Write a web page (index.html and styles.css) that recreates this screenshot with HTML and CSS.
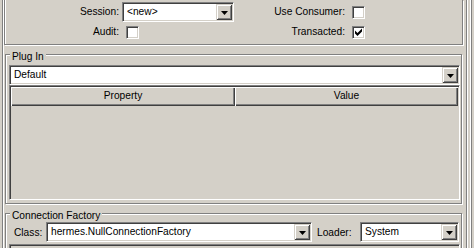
FILE: index.html
```html
<!DOCTYPE html>
<html lang="en">
<head>
    <meta charset="UTF-8">
    <title>Destination Properties</title>
    <link rel="stylesheet" href="styles.css">
</head>
<body>
    <div class="frame">
        <div class="content">
            <div class="props">
                <div class="label">Session:</div>
                <div class="combo">
                    <div class="value">&lt;new&gt;</div>
                    <div class="drop"><svg width="7" height="4" viewBox="0 0 7 4"><path d="M0 0h7l-3.5 4z" fill="#000"/></svg></div>
                </div>
                <div class="label label-wide">Use Consumer:</div>
                <div class="cell"><span class="check"></span></div>
                <div class="label">Audit:</div>
                <div class="cell"><span class="check check-inset"></span></div>
                <div class="label label-wide">Transacted:</div>
                <div class="cell">
                    <span class="check"><svg width="7" height="8" viewBox="0 0 7 8"><path d="M0 2.5L2.5 5L7 0.5V3.5L2.5 8L0 5.5Z" fill="#000"/></svg></span>
                </div>
            </div>

            <div class="group plugin">
                <div class="group-title">Plug In</div>
                <div class="combo">
                    <div class="value">Default</div>
                    <div class="drop"><svg width="7" height="4" viewBox="0 0 7 4"><path d="M0 0h7l-3.5 4z" fill="#000"/></svg></div>
                </div>
                <div class="table">
                    <div class="thead">
                        <div class="th th-first">Property</div>
                        <div class="th">Value</div>
                    </div>
                </div>
            </div>

            <div class="group factory">
                <div class="group-title">Connection Factory</div>
                <div class="factory-row">
                    <div class="row-label row-label-class">Class:</div>
                    <div class="combo combo-class">
                        <div class="value">hermes.NullConnectionFactory</div>
                        <div class="drop"><svg width="7" height="4" viewBox="0 0 7 4"><path d="M0 0h7l-3.5 4z" fill="#000"/></svg></div>
                    </div>
                    <div class="row-label row-label-loader">Loader:</div>
                    <div class="combo combo-loader">
                        <div class="value">System</div>
                        <div class="drop"><svg width="7" height="4" viewBox="0 0 7 4"><path d="M0 0h7l-3.5 4z" fill="#000"/></svg></div>
                    </div>
                </div>
                <div class="table table-factory"></div>
            </div>
        </div>
        <div class="divider"></div>
    </div>
</body>
</html>
```
FILE: styles.css
```css
body {
    margin: 0;
    background-color: #d4d0c8;
    font-family: "Liberation Sans", Arial, sans-serif;
    font-size: 10.2px;
    color: #000;
    overflow: hidden;
}
.frame {
    display: flex;
    height: 248px;
    width: 470px;
    margin-left: 2px;
    box-sizing: border-box;
    overflow: hidden;
    border-left: 1px solid #808080;
    border-right: 1px solid #808080;
    box-shadow: inset 1px 0 #fff, inset -1px 0 #fff;
}
.content {
    width: 459px;
    margin-left: 1px;
    display: flex;
    flex-direction: column;
    flex-shrink: 0;
}
.divider {
    width: 1px;
    margin-left: 3px;
    background-color: #808080;
    box-shadow: 1px 0 #fff;
}

/* top panel */
.props {
    display: grid;
    grid-template-columns: 117px 112px 118px 1fr;
    grid-template-rows: 20px 20px;
    padding: 2px 0;
    border: 1px solid #808080;
    border-top: 0;
    box-shadow: inset 1px 0 #fff, 1px 1px #fff;
}
.label {
    text-align: right;
    padding-right: 3px;
    line-height: 20px;
    white-space: nowrap;
}
.label-wide {
    padding-right: 7px;
}
.cell {
    display: flex;
    align-items: center;
}
.check {
    width: 13px;
    height: 13px;
    box-sizing: border-box;
    border: 1px solid;
    border-color: #808080 #fff #fff #808080;
    background-color: #fff;
    box-shadow: inset 1px 1px #404040, inset -1px -1px #d4d0c8;
    display: flex;
    align-items: center;
    justify-content: center;
}
.check-inset {
    margin-left: 4px;
}

/* combo box */
.combo {
    display: flex;
    height: 20px;
    box-sizing: border-box;
    padding: 1px;
    border: 1px solid;
    border-color: #808080 #fff #fff #808080;
    background-color: #fff;
    box-shadow: inset 1px 1px #404040, inset -1px -1px #d4d0c8;
}
.combo .value {
    flex: 1;
    padding-left: 3px;
    line-height: 16px;
    white-space: nowrap;
    overflow: hidden;
}
.combo .drop {
    width: 16px;
    background-color: #d4d0c8;
    box-shadow: inset 1px 1px #d4d0c8, inset -1px -1px #404040, inset 2px 2px #fff, inset -2px -2px #808080;
    display: flex;
    align-items: center;
    justify-content: center;
}
.combo .drop svg {
    display: block;
    margin-top: 1px;
}

/* group boxes */
.group {
    display: flex;
    flex-direction: column;
    margin: 9px 1px 0 1px;
    padding: 0 1px 3px 3px;
    border: 1px solid #808080;
    box-shadow: inset 1px 1px #fff, 1px 1px #fff;
}
.group-title {
    align-self: flex-start;
    margin: -5px 0 0 1px;
    padding: 0 2px;
    line-height: 13px;
    background-color: #d4d0c8;
}
.plugin .combo {
    margin-top: 2px;
}
.table {
    height: 115px;
    box-sizing: border-box;
    padding: 1px;
    border: 1px solid;
    border-color: #808080 #fff #fff #808080;
    box-shadow: inset 1px 1px #404040, inset -1px -1px #d4d0c8;
}
.thead {
    display: flex;
    height: 19px;
}
.th {
    flex: 1;
    text-align: center;
    line-height: 18px;
    box-shadow: inset 1px 1px #fff, inset -1px -1px #404040, inset -2px -2px #808080;
}
.th-first {
    flex: 0 0 224px;
}

/* connection factory */
.factory-row {
    display: flex;
    align-items: center;
    margin-top: 0;
}
.row-label {
    padding-left: 5px;
    box-sizing: border-box;
    white-space: nowrap;
}
.row-label-class {
    width: 37px;
}
.row-label-loader {
    width: 48px;
}
.combo-class {
    width: 266px;
}
.combo-loader {
    width: 99px;
}
.table-factory {
    margin-top: 2px;
    height: 60px;
}
```
